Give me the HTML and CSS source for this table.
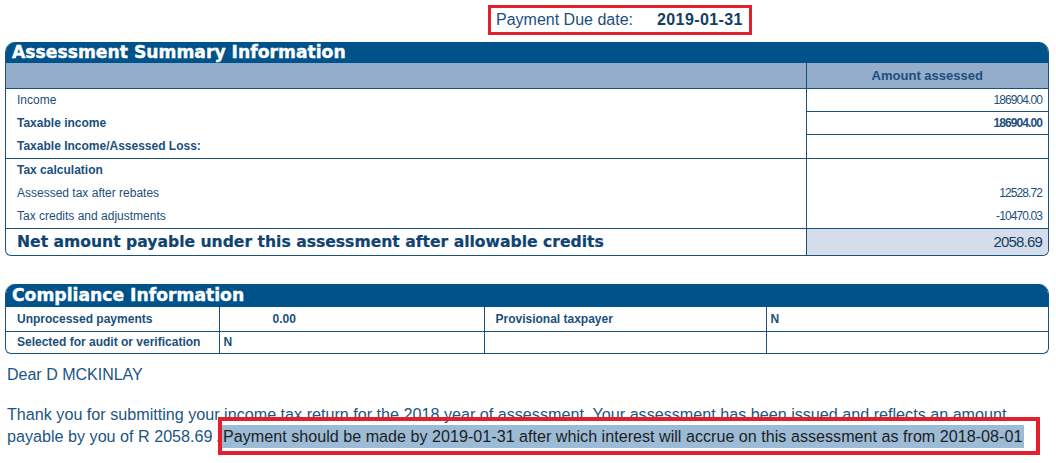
FILE: index.html
```html
<!DOCTYPE html>
<html>
<head>
<meta charset="utf-8">
<link rel="stylesheet" href="styles.css">
</head>
<body>
<div class="due"><span class="due-label">Payment Due date:</span><span class="due-date">2019-01-31</span></div>

<div class="box summary">
  <div class="box-head">Assessment Summary Information</div>
  <table class="grid">
    <colgroup><col class="c-label"><col class="c-amt"></colgroup>
    <tr class="sub"><td></td><td class="sub-amt">Amount assessed</td></tr>
    <tr class="r"><td class="lbl">Income</td><td class="num line-b">186904.00</td></tr>
    <tr class="r"><td class="lbl b">Taxable income</td><td class="num b line-b">186904.00</td></tr>
    <tr class="r tall line-bottom"><td class="lbl b">Taxable Income/Assessed Loss:</td><td class="num"></td></tr>
    <tr class="r"><td class="lbl b">Tax calculation</td><td class="num"></td></tr>
    <tr class="r"><td class="lbl">Assessed tax after rebates</td><td class="num">12528.72</td></tr>
    <tr class="r tall line-bottom"><td class="lbl">Tax credits and adjustments</td><td class="num">-10470.03</td></tr>
    <tr class="net"><td class="net-lbl">Net amount payable under this assessment after allowable credits</td><td class="net-amt">2058.69</td></tr>
  </table>
</div>

<div class="box compliance">
  <div class="box-head">Compliance Information</div>
  <table class="grid cgrid">
    <colgroup><col class="k1"><col class="k2"><col class="k3"><col class="k4"></colgroup>
    <tr class="cr"><td>Unprocessed payments</td><td class="zero">0.00</td><td>Provisional taxpayer</td><td class="n">N</td></tr>
    <tr class="cr last"><td>Selected for audit or verification</td><td class="n">N</td><td></td><td></td></tr>
  </table>
</div>

<p class="dear">Dear D MCKINLAY</p>

<div class="letter">
  <p class="text">Thank you for submitting your income tax return for the 2018 year of assessment. Your assessment has been issued and reflects an amount<br>payable by you of R 2058.69<span class="tight"> .</span> <span class="hl">Payment should be made by 2019-01-31 after which interest will accrue on this assessment as from 2018-08-01</span></p>
  <div class="redbox"></div>
</div>
</body>
</html>
```

FILE: styles.css
```css
html, body {
  margin: 0;
  padding: 0;
  background: #ffffff;
}
body {
  width: 1056px;
  height: 463px;
  overflow: hidden;
  font-family: "Liberation Sans", Arial, sans-serif;
  color: #1b4f7c;
}

.due {
  margin: 5px 0 0 488px;
  width: 264px;
  height: 30px;
  box-sizing: border-box;
  border: 3px solid #e2202b;
  display: flex;
  align-items: center;
  padding-left: 5px;
  white-space: nowrap;
  color: #1b4f7c;
}
.due-label {
  font-size: 16px;
  width: 161px;
  flex-shrink: 0;
}
.due-date {
  font-family: "Liberation Sans", Arial, sans-serif;
  font-weight: bold;
  font-size: 16px;
  letter-spacing: 0.4px;
  flex-shrink: 0;
  color: #123e66;
}

.box {
  margin-left: 5px;
  width: 1044px;
  border-radius: 10px 10px 6px 6px;
  border-left: 1px solid #1b4f7c;
  border-right: 1px solid #1b4f7c;
  border-bottom: 1px solid #1b4f7c;
  box-sizing: border-box;
  overflow: hidden;
}
.summary { margin-top: 7px; }
.compliance { margin-top: 28px; }

.box-head {
  background: #00528a;
  color: #ffffff;
  font-family: "DejaVu Sans", sans-serif;
  font-weight: bold;
  font-size: 17.2px;
  height: 21px;
  line-height: 21px;
  padding-left: 6px;
  -webkit-text-stroke: 0.4px #ffffff;
}
.compliance .box-head { height: 23px; line-height: 23px; }

.grid {
  width: 100%;
  border-collapse: collapse;
  table-layout: fixed;
}
.grid td {
  padding: 0;
  font-size: 12px;
}
.c-label { width: 800px; }
.c-amt { width: 242px; }

.sub { height: 25px; background: #93adca; }
.sub td { border-bottom: 1px solid #1b4f7c; }
.sub-amt {
  border-left: 1px solid #1b4f7c;
  text-align: center;
  font-weight: bold;
  font-size: 13px !important;
  color: #1b4f7c;
}

.r { height: 23px; }
.r.tall { height: 24px; }
.lbl { padding-left: 11px !important; }
.b { font-weight: bold; }
.num {
  border-left: 1px solid #1b4f7c;
  text-align: right;
  padding-right: 6px !important;
  letter-spacing: -0.9px;
  font-size: 12px;
}
.line-b { border-bottom: 1px solid #1b4f7c; }
.line-bottom td { border-bottom: 1px solid #1b4f7c; }

.net { height: 27px; }
.net-lbl {
  font-family: "DejaVu Sans", sans-serif;
  font-weight: bold;
  font-size: 15.6px !important;
  padding-left: 11px !important;
  color: #0f4373;
  -webkit-text-stroke: 0.2px #0f4373;
}
.net-amt {
  border-left: 1px solid #1b4f7c;
  background: #d5dcea;
  text-align: right;
  padding-right: 6px !important;
  font-size: 15px !important;
  letter-spacing: -0.8px;
  color: #123e66;
}

.k1 { width: 213px; }
.k2 { width: 265px; }
.k3 { width: 282px; }
.k4 { width: 282px; }
.cr { height: 24px; }
.cr.last { height: 22px; }
.cr td {
  font-weight: bold;
  font-size: 12px;
  padding-left: 11px;
  border-left: 1px solid #1b4f7c;
  border-bottom: 1px solid #1b4f7c;
}
.cr td:first-child { border-left: none; }
.cr.last td { border-bottom: none; }
.cr td.zero { padding-left: 53px; }
.cr td.n { padding-left: 4px; }

.dear {
  margin: 12px 0 0 7px;
  font-size: 16px;
  line-height: 18px;
  color: #1b5583;
}

.letter {
  position: relative;
  margin-top: 19px;
}
.text {
  margin: 0 0 0 7px;
  font-size: 16.15px;
  line-height: 22px;
  color: #1b5583;
}
.tight { letter-spacing: -1px; }
.hl {
  background: #9cbbd6;
  color: #1e1e1e;
  padding: 2px 2px 3px 2px;
  margin-left: -3px;
}
.redbox {
  position: absolute;
  left: 218px;
  top: 14px;
  width: 822px;
  height: 38px;
  box-sizing: border-box;
  border: 4px solid #e2202b;
}
```
